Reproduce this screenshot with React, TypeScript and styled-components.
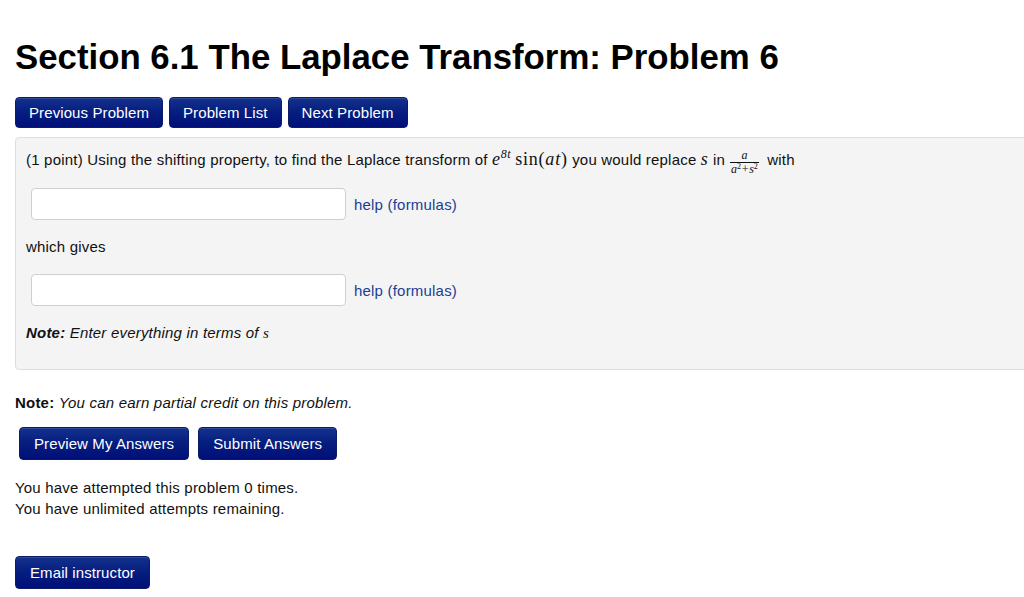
import styled, { createGlobalStyle } from 'styled-components';

const GlobalStyle = createGlobalStyle`
  html, body {
    margin: 0;
    padding: 0;
    background: #fff;
  }
  body {
    font-family: 'Liberation Sans', Arial, Helvetica, sans-serif;
    font-size: 15px;
    letter-spacing: 0.2px;
    color: #111;
  }
`;

const Page = styled.div`
  padding: 0 0 0 15px;
  overflow: hidden;
`;

const Title = styled.h1`
  margin: 0;
  padding-top: 38px;
  font-size: 34.8px;
  line-height: 38px;
  letter-spacing: 0;
  font-weight: bold;
  color: #000;
  white-space: nowrap;
`;

const NavBar = styled.div`
  display: flex;
  gap: 6px;
  margin-top: 21px;
`;

const Button = styled.button<{ $wide?: boolean }>`
  font-family: 'Liberation Sans', Arial, Helvetica, sans-serif;
  font-size: 15px;
  letter-spacing: 0.1px;
  line-height: 19px;
  color: #fff;
  padding: ${(p) => (p.$wide ? '6px 14px' : '5px 13px')};
  border: 1px solid #0a1d66;
  border-radius: 4px;
  background: linear-gradient(to bottom, #14318c 0%, #061f80 45%, #000f78 100%);
  box-shadow: inset 0 1px 0 rgba(255, 255, 255, 0.12);
  cursor: pointer;
`;

const ProblemPanel = styled.div`
  margin-top: 9px;
  width: 1040px;
  box-sizing: border-box;
  background: #f4f4f4;
  border: 1px solid #dedede;
  border-radius: 4px;
  padding: 11px 10px 26px;
  display: flex;
  flex-direction: column;
  gap: 17px;
`;

const Line = styled.div`
  line-height: 20px;
  white-space: nowrap;
`;

const IntroLine = styled(Line)`
  height: 20px;
  margin-bottom: 2px;
`;

const MathVar = styled.span<{ $size?: number }>`
  font-family: 'Liberation Serif', 'Times New Roman', serif;
  font-style: italic;
  font-size: ${(p) => p.$size ?? 18}px;
  letter-spacing: ${(p) => (p.$size ? 0 : 0.8)}px;
`;

const MathRoman = styled.span`
  font-family: 'Liberation Serif', 'Times New Roman', serif;
  font-size: 18px;
  letter-spacing: 0.8px;
`;

const Sup = styled.sup`
  font-size: 12px;
  line-height: 0;
  vertical-align: 7px;
  letter-spacing: 0.3px;
`;

const Frac = styled.span`
  display: inline-flex;
  flex-direction: column;
  align-items: center;
  vertical-align: middle;
  margin: 0 4px 0 5px;
  font-family: 'Liberation Serif', 'Times New Roman', serif;
  font-style: italic;
  font-size: 12px;
  line-height: 9px;
  letter-spacing: 0;
  position: relative;
  top: 1px;
`;

const Numer = styled.span`
  padding: 0 2px 2px;
  border-bottom: 1px solid #111;
  align-self: stretch;
  text-align: center;
`;

const Denom = styled.span`
  padding: 2px 1px 0;
`;

const SmallSup = styled.sup`
  font-size: 8px;
  font-style: normal;
  line-height: 0;
  vertical-align: 4px;
`;

const AnswerRow = styled.div`
  display: flex;
  align-items: center;
  gap: 8px;
  margin-left: 5px;
`;

const AnswerInput = styled.input`
  width: 315px;
  height: 32px;
  box-sizing: border-box;
  border: 1px solid #cfcfcf;
  border-radius: 4px;
  background: #fff;
  padding: 4px 6px;
  font-size: 14px;
`;

const HelpLink = styled.a`
  color: #1c3d92;
  text-decoration: none;
`;

const Note = styled.div`
  line-height: 20px;
  font-style: italic;
`;

const PartialNote = styled.div`
  margin-top: 23px;
  line-height: 20px;
`;

const SubmitBar = styled.div`
  display: flex;
  gap: 9px;
  margin: 14px 0 0 4px;
`;

const Attempts = styled.div`
  margin-top: 17px;
  line-height: 21px;
`;

const EmailBar = styled.div`
  margin-top: 37px;
`;

export default function App() {
  return (
    <>
      <GlobalStyle />
      <Page>
        <Title>Section 6.1 The Laplace Transform: Problem 6</Title>
        <NavBar>
          <Button>Previous Problem</Button>
          <Button>Problem List</Button>
          <Button>Next Problem</Button>
        </NavBar>

        <ProblemPanel>
          <IntroLine>
            (1 point) Using the shifting property, to find the Laplace transform of{' '}
            <MathVar>
              e<Sup>8t</Sup>
            </MathVar>{' '}
            <MathRoman>sin(</MathRoman>
            <MathVar>at</MathVar>
            <MathRoman>)</MathRoman> you would replace <MathVar>s</MathVar> in
            <Frac>
              <Numer>a</Numer>
              <Denom>
                a<SmallSup>2</SmallSup>+s<SmallSup>2</SmallSup>
              </Denom>
            </Frac>{' '}
            with
          </IntroLine>
          <AnswerRow>
            <AnswerInput type="text" />
            <HelpLink href="#">help (formulas)</HelpLink>
          </AnswerRow>
          <Line>which gives</Line>
          <AnswerRow>
            <AnswerInput type="text" />
            <HelpLink href="#">help (formulas)</HelpLink>
          </AnswerRow>
          <Note>
            <b>Note:</b> Enter everything in terms of <MathVar $size={15}>s</MathVar>
          </Note>
        </ProblemPanel>

        <PartialNote>
          <b>Note:</b> <i>You can earn partial credit on this problem.</i>
        </PartialNote>

        <SubmitBar>
          <Button $wide>Preview My Answers</Button>
          <Button $wide>Submit Answers</Button>
        </SubmitBar>

        <Attempts>
          You have attempted this problem 0 times.
          <br />
          You have unlimited attempts remaining.
        </Attempts>

        <EmailBar>
          <Button $wide>Email instructor</Button>
        </EmailBar>
      </Page>
    </>
  );
}
